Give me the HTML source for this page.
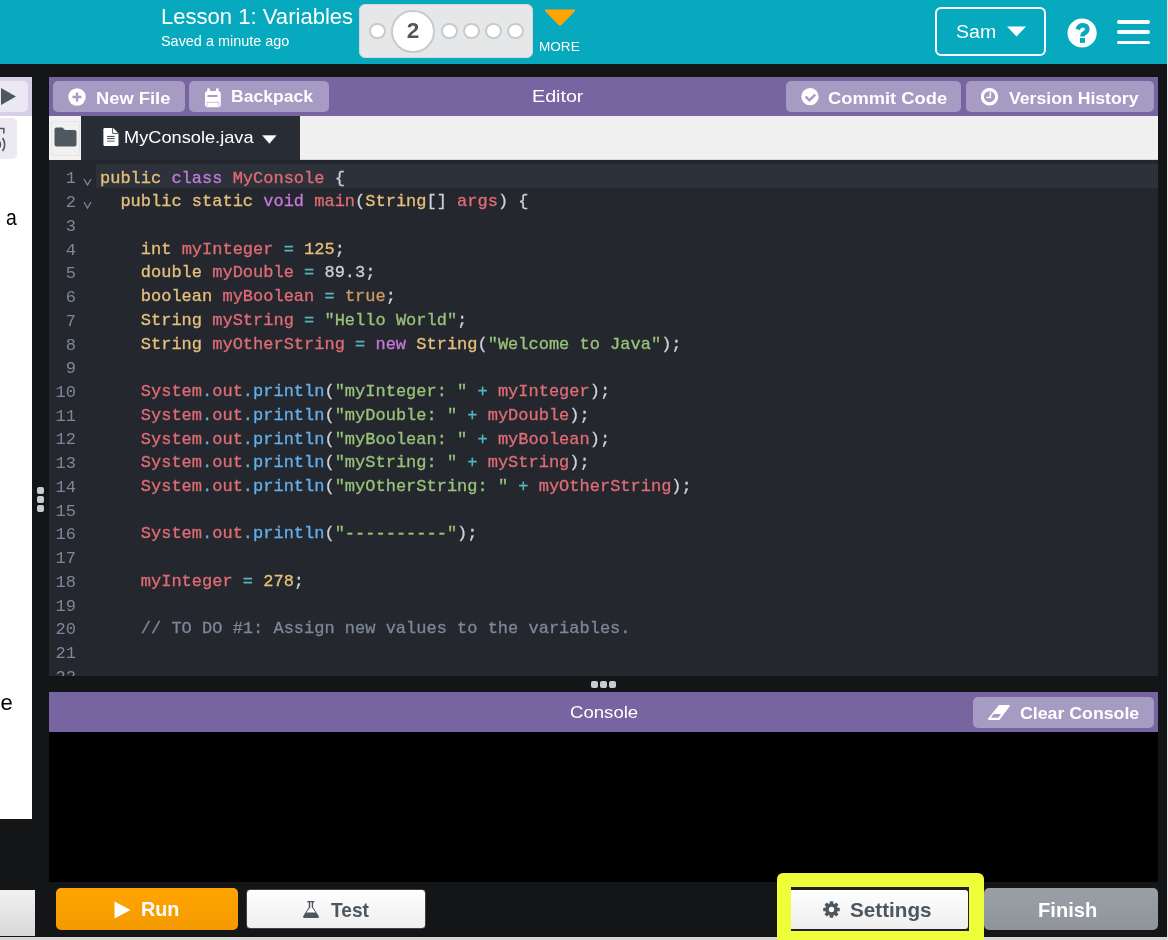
<!DOCTYPE html>
<html><head><meta charset="utf-8">
<style>
*{box-sizing:border-box;margin:0;padding:0}
html,body{width:1168px;height:940px;overflow:hidden;background:#141517;font-family:"Liberation Sans",sans-serif}
.a{position:absolute}
#hdr{left:0;top:0;width:1168px;height:64px;background:#07a9be}
.w{color:#fff;white-space:nowrap}
.btnp{background:#a69bc3;border-radius:5px}
.cm{font-family:"Liberation Mono",monospace;font-size:17px;white-space:pre;color:#abb2bf;-webkit-text-stroke:0.3px currentColor}
.ln{font-family:"Liberation Mono",monospace;font-size:17px;color:#7d8799;text-align:right;width:30px}
.y{color:#e5c07b}.v{color:#c678dd}.r{color:#e06c75}.c{color:#56b6c2}.g{color:#98c379}.b{color:#61afef}.o{color:#d19a66}.i{color:#cdd0d4}.k{color:#7d8799}
</style></head><body><div id="root" style="position:absolute;left:0;top:0;width:1168px;height:940px;will-change:transform">
<!-- header -->
<div id="hdr" class="a">
  <div id="t1" class="a w" style="left:160.5px;top:5.3px;font-size:21.5px;transform:scaleX(1.026);transform-origin:0 0;">Lesson 1: Variables</div>
  <div id="t2" class="a w" style="left:161px;top:32.6px;font-size:14px;transform:scaleX(1.03);transform-origin:0 0;">Saved a minute ago</div>
  <div class="a" style="left:359px;top:4px;width:174px;height:54px;background:#e6e7e9;border-radius:6px;border:1px solid #d5d6d8"></div>
  <div class="a" style="left:369px;top:22.9px;width:16.5px;height:16.5px;border-radius:50%;background:#fff;border:2.5px solid #c8cacc"></div>
  <div class="a" style="left:391.3px;top:9.6px;width:43.5px;height:43.5px;border-radius:50%;background:#fff;border:2.5px solid #c8cacc"></div>
  <div id="two" class="a" style="left:391.5px;top:18.1px;width:43px;text-align:center;font-size:22.5px;font-weight:bold;color:#4d575f">2</div>
  <div class="a" style="left:441px;top:22.9px;width:16.5px;height:16.5px;border-radius:50%;background:#fff;border:2.5px solid #c8cacc"></div>
  <div class="a" style="left:463px;top:22.9px;width:16.5px;height:16.5px;border-radius:50%;background:#fff;border:2.5px solid #c8cacc"></div>
  <div class="a" style="left:485px;top:22.9px;width:16.5px;height:16.5px;border-radius:50%;background:#fff;border:2.5px solid #c8cacc"></div>
  <div class="a" style="left:507px;top:22.9px;width:16.5px;height:16.5px;border-radius:50%;background:#fff;border:2.5px solid #c8cacc"></div>
  <svg class="a" style="left:543px;top:8px" width="34" height="19" viewBox="0 0 34 19"><path d="M3 1.5 L31 1.5 Q33 1.5 31.5 3.5 L18.5 17 Q17 18.5 15.5 17 L2.5 3.5 Q1 1.5 3 1.5Z" fill="#ffa400"/></svg>
  <div id="more" class="a w" style="left:539px;top:39.7px;font-size:12px;transform:scaleX(1.13);transform-origin:0 0;">MORE</div>
  <div class="a" style="left:935px;top:7px;width:111px;height:49px;border:2px solid #fff;border-radius:6px"></div>
  <div id="sam" class="a w" style="left:956px;top:22px;font-size:18px;transform:scaleX(1.086);transform-origin:0 0;">Sam</div>
  <svg class="a" style="left:1006px;top:26px" width="21" height="11" viewBox="0 0 21 11"><path d="M1 0.5 L20 0.5 L10.5 10.5Z" fill="#fff"/></svg>
  <svg class="a" style="left:1067px;top:18px" width="30" height="30" viewBox="0 0 30 30"><circle cx="15.1" cy="15" r="14.6" fill="#fff"/><path d="M10.6 11.3 Q12.2 7.2 15.5 7.2 Q20.3 7.2 20.3 11 Q20.3 13.6 17.6 15 Q15.5 16.1 15.5 18.4" stroke="#07a9be" stroke-width="4.6" fill="none"/><rect x="13" y="20" width="5" height="4.9" fill="#07a9be"/></svg>
  <div class="a" style="left:1117.2px;top:20px;width:32.8px;height:3.6px;border-radius:2px;background:#fff"></div>
  <div class="a" style="left:1117.2px;top:30.2px;width:32.8px;height:3.6px;border-radius:2px;background:#fff"></div>
  <div class="a" style="left:1117.2px;top:40.5px;width:32.8px;height:3.6px;border-radius:2px;background:#fff"></div>
</div>

<!-- left panel -->
<div class="a" style="left:0;top:77px;width:32px;height:742px;background:#fff;overflow:hidden">
  <div class="a" style="left:0;top:0;width:32px;height:39px;background:#d7cfe6"></div>
  <div class="a" style="left:-6px;top:4px;width:34px;height:31px;background:#ece8f3;border-radius:5px"></div>
  <svg class="a" style="left:0;top:10px" width="17" height="19" viewBox="0 0 17 19"><path d="M1 1 L16 9.5 L1 18Z" fill="#4d575f"/></svg>
  <div class="a" style="left:-20px;top:41px;width:37px;height:41px;background:#ece9f3;border-radius:5px"></div>
  <svg class="a" style="left:0;top:50px" width="9" height="26" viewBox="0 0 9 26"><path d="M-1 1.6 L3.8 1.6 L3.8 6.5" stroke="#4d575f" stroke-width="1.5" fill="none"/><path d="M2.6 11 Q6.8 17.5 2.6 24" stroke="#4d575f" stroke-width="1.7" fill="none"/><path d="M-1.2 13.5 Q2 17.5 -1.2 21.5" stroke="#4d575f" stroke-width="1.7" fill="none"/></svg>
  <div class="a" style="left:6px;top:128px;font-size:22px;color:#000;transform:scaleX(0.88);transform-origin:0 0">a</div>
  <div class="a" style="left:0.5px;top:613.3px;font-size:22px;color:#000">e</div>
</div>
<div class="a" style="left:0;top:890px;width:35px;height:46px;background:linear-gradient(#f1f1f1,#d8d8d8)"></div>
<!-- drag dots -->
<div class="a" style="left:37px;top:487px;width:7px;height:6.5px;background:#c9cccf;border-radius:2px"></div>
<div class="a" style="left:37px;top:496px;width:7px;height:6.5px;background:#c9cccf;border-radius:2px"></div>
<div class="a" style="left:37px;top:505px;width:7px;height:6.5px;background:#c9cccf;border-radius:2px"></div>

<!-- editor header -->
<div class="a" style="left:49px;top:77px;width:1109px;height:39px;background:#7665a0">
</div>
<div class="a btnp" style="left:53px;top:81px;width:132px;height:31px"></div>
<svg class="a" style="left:68px;top:88px" width="18" height="18" viewBox="0 0 18 18"><circle cx="9" cy="9" r="8.7" fill="#fff"/><path d="M9 4.5 V13.5 M4.5 9 H13.5" stroke="#a69bc3" stroke-width="2.4"/></svg>
<div id="nf" class="a w" style="left:96px;top:89.5px;font-size:16px;font-weight:bold;transform:scaleX(1.146);transform-origin:0 0;">New File</div>
<div class="a btnp" style="left:189px;top:81px;width:140px;height:31px"></div>
<svg class="a" style="left:204px;top:87px" width="18" height="22" viewBox="0 0 18 22"><rect x="3.2" y="1.2" width="2.7" height="4.5" rx="1.2" fill="#fff"/><rect x="11.9" y="1.2" width="2.7" height="4.5" rx="1.2" fill="#fff"/><rect x="1" y="4.1" width="15.8" height="16.1" rx="2.6" fill="#fff"/><rect x="3.2" y="8" width="10.6" height="2.1" rx="1" fill="#a69bc3"/><path d="M2.9 20.2 V15.4 H14.9 V20.2" stroke="#d5cfe3" stroke-width="1.1" fill="none"/></svg>
<div id="bp" class="a w" style="left:231px;top:88.4px;font-size:16px;font-weight:bold;transform:scaleX(1.097);transform-origin:0 0;">Backpack</div>
<div id="ed" class="a w" style="left:532px;top:87px;font-size:17px;transform:scaleX(1.158);transform-origin:0 0;">Editor</div>
<div class="a btnp" style="left:786px;top:81px;width:175px;height:31px"></div>
<svg class="a" style="left:800.5px;top:88px" width="18" height="18" viewBox="0 0 18 18"><circle cx="9" cy="8.7" r="8.65" fill="#fff"/><path d="M4.6 8.5 L8.4 12.3 L14.2 6.6" stroke="#a69bc3" stroke-width="2.4" fill="none"/></svg>
<div id="cc" class="a w" style="left:828px;top:89.5px;font-size:16px;font-weight:bold;transform:scaleX(1.145);transform-origin:0 0;">Commit Code</div>
<div class="a btnp" style="left:966px;top:81px;width:188px;height:31px"></div>
<svg class="a" style="left:981px;top:88px" width="18" height="18" viewBox="0 0 18 18"><circle cx="8.5" cy="8.7" r="7.15" fill="none" stroke="#fff" stroke-width="3.2"/><path d="M9.35 4.3 V9.4 H5.4" stroke="#fff" stroke-width="1.5" fill="none"/></svg>
<div id="vh" class="a w" style="left:1009px;top:89.5px;font-size:16px;font-weight:bold;transform:scaleX(1.103);transform-origin:0 0;">Version History</div>

<!-- tabs row -->
<div class="a" style="left:49px;top:116px;width:1109px;height:44px;background:#f0f0f0;border-bottom:1px solid #d8d8d8"></div>
<div class="a" style="left:49px;top:116px;width:32px;height:43.5px;background:#f2f2f2"></div><div class="a" style="left:50.5px;top:120.5px;width:29px;height:35px;background:#f1f1f1;border:1px solid #e6e6e6;border-radius:2px"></div>
<svg class="a" style="left:54px;top:127px" width="23" height="20" viewBox="0 0 23 20"><path d="M2.5 0.5 H8.5 L11 3 H20.5 Q22.5 3 22.5 5 V17.5 Q22.5 19.5 20.5 19.5 H2.5 Q0.5 19.5 0.5 17.5 V2.5 Q0.5 0.5 2.5 0.5Z" fill="#4e5860"/></svg>
<div class="a" style="left:81px;top:116px;width:219px;height:44px;background:#282c34"></div>
<svg class="a" style="left:103px;top:128px" width="16" height="18" viewBox="0 0 16 18"><path d="M0.4 1.2 Q0.4 0.1 1.5 0.1 H10.3 L15.5 5.6 V16.8 Q15.5 17.9 14.4 17.9 H1.5 Q0.4 17.9 0.4 16.8Z" fill="#fff"/><path d="M9.7 0 V5.3 H15.5" stroke="#282c34" stroke-width="0.9" fill="none"/><path d="M10.3 0.9 L14.6 4.8 H10.3Z" fill="#fff"/><rect x="4.1" y="7.9" width="7.5" height="1.1" fill="#4a4f57"/><rect x="4.1" y="10" width="7.5" height="1.1" fill="#4a4f57"/><rect x="4.1" y="12.6" width="7.5" height="1.1" fill="#6a6f77"/></svg>
<div id="tab" class="a w" style="left:124px;top:128px;font-size:17px;transform:scaleX(1.071);transform-origin:0 0;">MyConsole.java</div>
<svg class="a" style="left:262.3px;top:134.8px" width="15" height="9" viewBox="0 0 15 9"><path d="M0.5 0.6 H14.2 L7.4 8.4Z" fill="#fff" stroke="#fff" stroke-width="0.4" stroke-linejoin="round"/></svg>

<!-- code area -->
<div class="a" style="left:49px;top:160px;width:1109px;height:516px;background:#24272d;overflow:hidden">
  <div class="a" style="left:47px;top:4px;width:1062px;height:23.7px;background:#2c313a"></div>
  <div id="code" class="a" style="left:0;top:4px;width:1109px">
<!--CODE-->
<div class="a ln" style="left:-3px;top:3.40px;height:23.73px;line-height:23.73px">1</div>
<div class="a cm" style="left:51px;top:2.50px;height:23.73px;line-height:23.73px"><span class="y">public</span> <span class="v">class</span> <span class="r">MyConsole</span> <span class="i">{</span></div>
<div class="a ln" style="left:-3px;top:27.13px;height:23.73px;line-height:23.73px">2</div>
<div class="a cm" style="left:51px;top:26.23px;height:23.73px;line-height:23.73px">  <span class="y">public</span> <span class="y">static</span> <span class="v">void</span> <span class="r">main</span><span class="i">(</span><span class="y">String</span><span class="i">[]</span> <span class="r">args</span><span class="i">)</span> <span class="i">{</span></div>
<div class="a ln" style="left:-3px;top:50.86px;height:23.73px;line-height:23.73px">3</div>
<div class="a ln" style="left:-3px;top:74.59px;height:23.73px;line-height:23.73px">4</div>
<div class="a cm" style="left:51px;top:73.69px;height:23.73px;line-height:23.73px">    <span class="y">int</span> <span class="r">myInteger</span> <span class="c">=</span> <span class="y">125</span><span class="i">;</span></div>
<div class="a ln" style="left:-3px;top:98.32px;height:23.73px;line-height:23.73px">5</div>
<div class="a cm" style="left:51px;top:97.42px;height:23.73px;line-height:23.73px">    <span class="y">double</span> <span class="r">myDouble</span> <span class="c">=</span> <span class="i">89.3</span><span class="i">;</span></div>
<div class="a ln" style="left:-3px;top:122.05px;height:23.73px;line-height:23.73px">6</div>
<div class="a cm" style="left:51px;top:121.15px;height:23.73px;line-height:23.73px">    <span class="y">boolean</span> <span class="r">myBoolean</span> <span class="c">=</span> <span class="o">true</span><span class="i">;</span></div>
<div class="a ln" style="left:-3px;top:145.78px;height:23.73px;line-height:23.73px">7</div>
<div class="a cm" style="left:51px;top:144.88px;height:23.73px;line-height:23.73px">    <span class="y">String</span> <span class="r">myString</span> <span class="c">=</span> <span class="g">"Hello World"</span><span class="i">;</span></div>
<div class="a ln" style="left:-3px;top:169.51px;height:23.73px;line-height:23.73px">8</div>
<div class="a cm" style="left:51px;top:168.61px;height:23.73px;line-height:23.73px">    <span class="y">String</span> <span class="r">myOtherString</span> <span class="c">=</span> <span class="v">new</span> <span class="y">String</span><span class="i">(</span><span class="g">"Welcome to Java"</span><span class="i">);</span></div>
<div class="a ln" style="left:-3px;top:193.24px;height:23.73px;line-height:23.73px">9</div>
<div class="a ln" style="left:-3px;top:216.97px;height:23.73px;line-height:23.73px">10</div>
<div class="a cm" style="left:51px;top:216.07px;height:23.73px;line-height:23.73px">    <span class="r">System</span><span class="c">.</span><span class="r">out</span><span class="c">.</span><span class="b">println</span><span class="i">(</span><span class="g">"myInteger: "</span> <span class="c">+</span> <span class="r">myInteger</span><span class="i">);</span></div>
<div class="a ln" style="left:-3px;top:240.70px;height:23.73px;line-height:23.73px">11</div>
<div class="a cm" style="left:51px;top:239.80px;height:23.73px;line-height:23.73px">    <span class="r">System</span><span class="c">.</span><span class="r">out</span><span class="c">.</span><span class="b">println</span><span class="i">(</span><span class="g">"myDouble: "</span> <span class="c">+</span> <span class="r">myDouble</span><span class="i">);</span></div>
<div class="a ln" style="left:-3px;top:264.43px;height:23.73px;line-height:23.73px">12</div>
<div class="a cm" style="left:51px;top:263.53px;height:23.73px;line-height:23.73px">    <span class="r">System</span><span class="c">.</span><span class="r">out</span><span class="c">.</span><span class="b">println</span><span class="i">(</span><span class="g">"myBoolean: "</span> <span class="c">+</span> <span class="r">myBoolean</span><span class="i">);</span></div>
<div class="a ln" style="left:-3px;top:288.16px;height:23.73px;line-height:23.73px">13</div>
<div class="a cm" style="left:51px;top:287.26px;height:23.73px;line-height:23.73px">    <span class="r">System</span><span class="c">.</span><span class="r">out</span><span class="c">.</span><span class="b">println</span><span class="i">(</span><span class="g">"myString: "</span> <span class="c">+</span> <span class="r">myString</span><span class="i">);</span></div>
<div class="a ln" style="left:-3px;top:311.89px;height:23.73px;line-height:23.73px">14</div>
<div class="a cm" style="left:51px;top:310.99px;height:23.73px;line-height:23.73px">    <span class="r">System</span><span class="c">.</span><span class="r">out</span><span class="c">.</span><span class="b">println</span><span class="i">(</span><span class="g">"myOtherString: "</span> <span class="c">+</span> <span class="r">myOtherString</span><span class="i">);</span></div>
<div class="a ln" style="left:-3px;top:335.62px;height:23.73px;line-height:23.73px">15</div>
<div class="a ln" style="left:-3px;top:359.35px;height:23.73px;line-height:23.73px">16</div>
<div class="a cm" style="left:51px;top:358.45px;height:23.73px;line-height:23.73px">    <span class="r">System</span><span class="c">.</span><span class="r">out</span><span class="c">.</span><span class="b">println</span><span class="i">(</span><span class="g">"----------"</span><span class="i">);</span></div>
<div class="a ln" style="left:-3px;top:383.08px;height:23.73px;line-height:23.73px">17</div>
<div class="a ln" style="left:-3px;top:406.81px;height:23.73px;line-height:23.73px">18</div>
<div class="a cm" style="left:51px;top:405.91px;height:23.73px;line-height:23.73px">    <span class="r">myInteger</span> <span class="c">=</span> <span class="y">278</span><span class="i">;</span></div>
<div class="a ln" style="left:-3px;top:430.54px;height:23.73px;line-height:23.73px">19</div>
<div class="a ln" style="left:-3px;top:454.27px;height:23.73px;line-height:23.73px">20</div>
<div class="a cm" style="left:51px;top:453.37px;height:23.73px;line-height:23.73px">    <span class="k">// TO DO #1: Assign new values to the variables.</span></div>
<div class="a ln" style="left:-3px;top:478.00px;height:23.73px;line-height:23.73px">21</div>
<div class="a ln" style="left:-3px;top:501.73px;height:23.73px;line-height:23.73px">22</div>
<svg class="a" style="left:34px;top:13.60px" width="10" height="8" viewBox="0 0 10 8"><path d="M1 1 L4.5 7 L8 1" stroke="#7d8799" stroke-width="1.3" fill="none"/></svg>
<svg class="a" style="left:34px;top:37.33px" width="10" height="8" viewBox="0 0 10 8"><path d="M1 1 L4.5 7 L8 1" stroke="#7d8799" stroke-width="1.3" fill="none"/></svg>
<!--/CODE-->
  </div>
</div>
<!-- resize -->
<div class="a" style="left:591px;top:681px;width:7px;height:7px;background:#c9cccf;border-radius:2px"></div>
<div class="a" style="left:600px;top:681px;width:7px;height:7px;background:#c9cccf;border-radius:2px"></div>
<div class="a" style="left:609px;top:681px;width:7px;height:7px;background:#c9cccf;border-radius:2px"></div>

<!-- console -->
<div class="a" style="left:49px;top:692px;width:1109px;height:40px;background:#7665a0"></div>
<div id="con" class="a w" style="left:569.5px;top:702.8px;font-size:17px;transform:scaleX(1.093);transform-origin:0 0;">Console</div>
<div class="a btnp" style="left:973px;top:697px;width:181px;height:31px"></div>
<svg class="a" style="left:987px;top:704px" width="24" height="17" viewBox="0 0 24 17"><path d="M12.2 2 L21.9 2 L11.9 15.1 L1.9 15.1Z" fill="#fff" stroke="#fff" stroke-width="1.8" stroke-linejoin="round"/><path d="M6.6 10.1 L14 10.1 L11.4 13.8 L4 13.8Z" fill="#a69bc3"/></svg>
<div id="clr" class="a w" style="left:1020px;top:705px;font-size:16px;font-weight:bold;transform:scaleX(1.108);transform-origin:0 0;">Clear Console</div>
<div class="a" style="left:49px;top:732px;width:1109px;height:150px;background:#000"></div>

<!-- bottom -->
<div class="a" style="left:56px;top:888px;width:182px;height:42px;border-radius:5px;background:linear-gradient(#ffa400,#f49a00)"></div>
<svg class="a" style="left:114px;top:901px" width="17" height="18" viewBox="0 0 17 18"><path d="M0.5 0.5 L16.5 9 L0.5 17.5Z" fill="#fff"/></svg>
<div id="run" class="a w" style="left:141px;top:897.3px;font-size:21px;font-weight:bold;transform-origin:0 0;transform:scaleX(0.941);">Run</div>
<div class="a" style="left:245.6px;top:889.4px;width:180.8px;height:40px;border-radius:4px;background:linear-gradient(#fff,#eeeeee);border:1px solid #3c4247"></div>
<svg class="a" style="left:303px;top:900px" width="17" height="19" viewBox="0 0 17 19"><path d="M4.4 1 H11.3 V2.5 H10.1 V7.2 L15.7 16.1 Q16.5 17.9 14.5 17.9 H1.5 Q-0.5 17.9 0.3 16.1 L5.8 7.2 V2.5 H4.4Z" fill="#4d575f"/><path d="M7.1 2.5 V7.6 L3.4 12.6 H12.6 L8.9 7.6 V2.5Z" fill="#fff"/><rect x="7.1" y="2.5" width="1.8" height="5" fill="#c9cdd1"/></svg>
<div id="test" class="a" style="left:331px;top:897.8px;font-size:21px;font-weight:bold;color:#4d575f;transform:scaleX(0.91);transform-origin:0 0;">Test</div>

<div class="a" style="left:984px;top:888px;width:174px;height:42px;border-radius:5px;background:linear-gradient(#9aa0a5,#8e9499)"></div>
<div id="fin" class="a w" style="left:1038px;top:897.5px;font-size:21px;font-weight:bold;transform-origin:0 0;transform:scaleX(0.959);">Finish</div>

<div class="a" style="left:777px;top:873px;width:207px;height:67px;background:#eeff3a;border-radius:6px 6px 0 0"></div>
<div class="a" style="left:790.9px;top:886.9px;width:178.4px;height:44.1px;background:#1e2126"></div>
<div class="a" style="left:790.9px;top:889.6px;width:176.8px;height:39.4px;border-radius:0 3px 3px 0;background:linear-gradient(#fff,#eeeeee)"></div>
<svg class="a" style="left:823px;top:901px" width="17" height="17" viewBox="0 0 17 17"><g fill="#4d575f"><circle cx="8.5" cy="8.5" r="6.2"/><rect x="6.7" y="0.2" width="3.6" height="16.6" rx="0.9" transform="rotate(0 8.5 8.5)"/><rect x="6.7" y="0.2" width="3.6" height="16.6" rx="0.9" transform="rotate(45 8.5 8.5)"/><rect x="6.7" y="0.2" width="3.6" height="16.6" rx="0.9" transform="rotate(90 8.5 8.5)"/><rect x="6.7" y="0.2" width="3.6" height="16.6" rx="0.9" transform="rotate(135 8.5 8.5)"/></g><circle cx="8.5" cy="8.5" r="2.7" fill="#fff"/></svg>
<div id="set" class="a" style="left:850px;top:898.4px;font-size:21px;font-weight:bold;color:#4d575f;transform-origin:0 0;transform:scaleX(0.984);">Settings</div>

<div class="a" style="left:0;top:937px;width:1168px;height:3px;background:#d5d6d4"></div>
<div class="a" style="left:777px;top:936px;width:207px;height:4px;background:#eeff3a"></div>
<div class="a" style="left:1167px;top:0;width:1px;height:940px;background:#e4e4e4"></div>
</div></body></html>
